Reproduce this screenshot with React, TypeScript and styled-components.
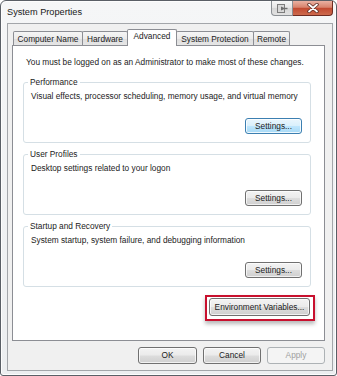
import React from "react";
import styled, { createGlobalStyle, css } from "styled-components";

const FS = "8.3px";

const Global = createGlobalStyle`
  html, body { margin: 0; padding: 0; background: #ffffff; }
  body { font-family: "Liberation Sans", Arial, sans-serif; color: #1b1b1b; }
  * { box-sizing: border-box; }
`;

const Window = styled.div`
  width: 337px;
  height: 376px;
  border: 1px solid #5a5f66;
  border-radius: 6px 6px 3px 3px;
  background: linear-gradient(#f5f6f7, #eceef0);
  box-shadow: inset 0 0 0 1px #fdfdfd;
  display: flex;
  flex-direction: column;
  padding: 0 3px 4px 6px;
`;

const TitleBar = styled.div`
  height: 22px;
  display: flex;
  align-items: flex-start;
  justify-content: space-between;
`;

const Title = styled.div`
  font-size: 9.2px;
  line-height: 23px;
  color: #1a1a1a;
`;

const Caption = styled.div`
  display: flex;
  height: 15px;
`;

const CaptionButton = styled.div<{ $kind: "help" | "close" }>`
  height: 15px;
  display: flex;
  align-items: center;
  justify-content: center;
  ${(p) =>
    p.$kind === "help"
      ? css`
          width: 22px;
          border: 1px solid #8b8f94;
          border-top: none;
          border-radius: 0 0 0 4px;
          background: linear-gradient(#f7f7f7, #e4e4e4 50%, #d6d6d6 51%, #e2e2e2);
        `
      : css`
          width: 40px;
          border: 1px solid #6e2b21;
          border-top: none;
          border-left: none;
          border-radius: 0 0 4px 0;
          background: linear-gradient(#eab1a2, #d8836d 45%, #c24a31 52%, #cc6a4d 100%);
        `}
`;

const Client = styled.div`
  flex: 1;
  border: 1px solid #a3a6aa;
  background: #f0f0f0;
  display: flex;
  flex-direction: column;
  padding: 5px 7px 6px 4px;
`;

const TabStrip = styled.div`
  display: flex;
  align-items: flex-end;
  height: 16px;
  padding-left: 1px;
`;

const Tab = styled.div<{ $w: number; $active?: boolean }>`
  width: ${(p) => p.$w}px;
  font-size: ${FS};
  white-space: nowrap;
  text-align: center;
  border: 1px solid #8c8e94;
  border-bottom: none;
  border-radius: 2px 2px 0 0;
  margin-left: -1px;
  &:first-child { margin-left: 0; }
  ${(p) =>
    p.$active
      ? css`
          height: 17px;
          line-height: 13px;
          margin-bottom: -1px;
          background: #ffffff;
          position: relative;
          z-index: 1;
        `
      : css`
          height: 14px;
          line-height: 15px;
          background: linear-gradient(#f5f5f5, #ececec 50%, #dedede 51%, #e6e6e6);
        `}
`;

const Panel = styled.div`
  flex: 1;
  border: 1px solid #8c8e94;
  background: #ffffff;
  display: flex;
  flex-direction: column;
  padding: 11px 9px 0 10px;
`;

const Notice = styled.div`
  font-size: ${FS};
  line-height: 11px;
  padding-left: 3px;
  margin-bottom: 9px;
  white-space: nowrap;
`;

const Group = styled.fieldset`
  margin: 0 4px 6px 0;
  padding: 3px 8px 8px 7px;
  border: 1px solid #d5dfe5;
  border-radius: 3px;
  display: flex;
  flex-direction: column;
  min-width: 0;
`;

const Legend = styled.legend`
  font-size: ${FS};
  line-height: 11px;
  padding: 0 2px;
  margin-left: -3px;
`;

const Desc = styled.div`
  font-size: ${FS};
  line-height: 11px;
  white-space: nowrap;
`;

const ButtonRow = styled.div<{ $top?: number }>`
  display: flex;
  justify-content: flex-end;
  gap: 6px;
  margin-top: ${(p) => p.$top ?? 0}px;
`;

const Button = styled.div<{ $w: number; $h?: number; $focus?: boolean; $disabled?: boolean }>`
  width: ${(p) => p.$w}px;
  height: ${(p) => p.$h ?? 16}px;
  font-size: ${FS};
  line-height: ${(p) => (p.$h ?? 16) - 2}px;
  text-align: center;
  white-space: nowrap;
  border-radius: 3px;
  border: 1px solid #707070;
  background: linear-gradient(#f3f3f3, #ebebeb 48%, #dddddd 52%, #cfcfcf);
  box-shadow: inset 0 0 0 1px rgba(255, 255, 255, 0.7);
  color: #1b1b1b;
  ${(p) =>
    p.$focus &&
    css`
      border-color: #3c7fb1;
      background: linear-gradient(#eaf6fd, #d9f0fc 48%, #bee6fd 52%, #a7d9f5);
      box-shadow: inset 0 0 0 1px rgba(255, 255, 255, 0.8);
    `}
  ${(p) =>
    p.$disabled &&
    css`
      border-color: #adb2b5;
      background: #f4f4f4;
      color: #a0a0a0;
      box-shadow: none;
    `}
`;

const Highlight = styled.div`
  align-self: flex-end;
  margin-top: 2px;
  border: 2px solid #c8102e;
  padding: 1px 3px 3px 2px;
  box-shadow: 0 3px 4px rgba(0, 0, 0, 0.28);
  background: #ffffff;
`;

const Footer = styled(ButtonRow)`
  margin-top: 6px;
`;

const HelpIcon = () => (
  <svg width="11" height="9" viewBox="0 0 11 9">
    <rect x="0.5" y="0.5" width="7" height="8" fill="#d8d8d8" stroke="#7d7d7d" />
    <path d="M4 2.5 L8.5 4.5 L4 6.5 Z" fill="#6d6d6d" />
    <path d="M8 4.5 L10.5 4.5" stroke="#6d6d6d" strokeWidth="1.4" />
  </svg>
);

const CloseIcon = () => (
  <svg width="12" height="10" viewBox="0 0 12 10">
    <path d="M2 1.5 L10 8.5 M10 1.5 L2 8.5" stroke="#5a2a22" strokeWidth="3.4" strokeLinecap="round" />
    <path d="M2 1.5 L10 8.5 M10 1.5 L2 8.5" stroke="#ffffff" strokeWidth="1.8" strokeLinecap="round" />
  </svg>
);

const groups = [
  { title: "Performance", desc: "Visual effects, processor scheduling, memory usage, and virtual memory", focus: true },
  { title: "User Profiles", desc: "Desktop settings related to your logon", focus: false },
  { title: "Startup and Recovery", desc: "System startup, system failure, and debugging information", focus: false },
];

const tabs = [
  { label: "Computer Name", w: 70 },
  { label: "Hardware", w: 46 },
  { label: "Advanced", w: 50, active: true },
  { label: "System Protection", w: 78 },
  { label: "Remote", w: 37 },
];

export default function App() {
  return (
    <>
      <Global />
      <Window>
        <TitleBar>
          <Title>System Properties</Title>
          <Caption>
            <CaptionButton $kind="help">
              <HelpIcon />
            </CaptionButton>
            <CaptionButton $kind="close">
              <CloseIcon />
            </CaptionButton>
          </Caption>
        </TitleBar>
        <Client>
          <TabStrip>
            {tabs.map((t) => (
              <Tab key={t.label} $w={t.w} $active={t.active}>
                {t.label}
              </Tab>
            ))}
          </TabStrip>
          <Panel>
            <Notice>You must be logged on as an Administrator to make most of these changes.</Notice>
            {groups.map((g) => (
              <Group key={g.title}>
                <Legend>{g.title}</Legend>
                <Desc>{g.desc}</Desc>
                <ButtonRow $top={16}>
                  <Button $w={57} $focus={g.focus}>
                    Settings...
                  </Button>
                </ButtonRow>
              </Group>
            ))}
            <Highlight>
              <Button $w={101} $h={18}>
                Environment Variables...
              </Button>
            </Highlight>
          </Panel>
          <Footer>
            <Button $w={59} $h={17}>OK</Button>
            <Button $w={58} $h={17}>Cancel</Button>
            <Button $w={58} $h={17} $disabled>
              Apply
            </Button>
          </Footer>
        </Client>
      </Window>
    </>
  );
}
